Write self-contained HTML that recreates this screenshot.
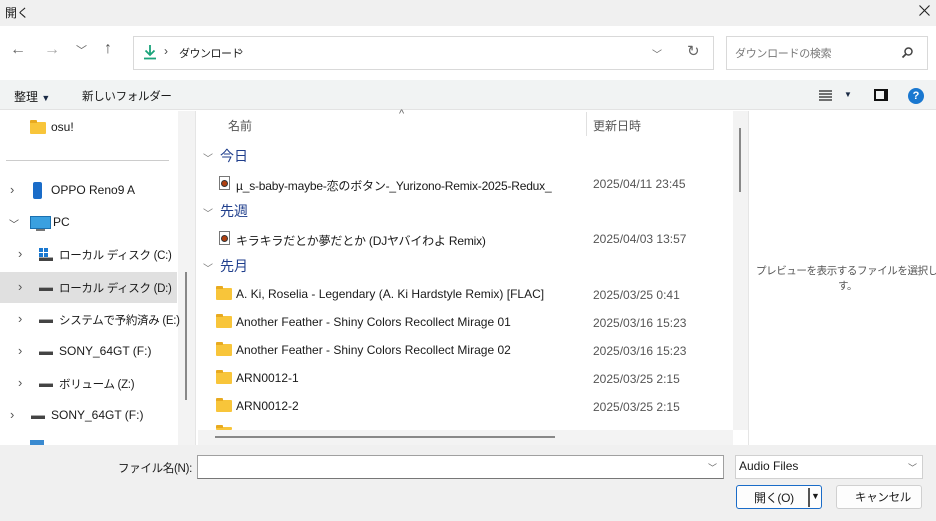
<!DOCTYPE html>
<html><head><meta charset="utf-8"><style>
*{margin:0;padding:0;box-sizing:border-box}
body{width:936px;height:521px;overflow:hidden;background:#fff;font-family:"Liberation Sans","Noto Sans CJK JP",sans-serif;font-size:12px;color:#1a1a1a;position:relative}
.a{position:absolute;white-space:nowrap}
.j{font-size:11.5px;letter-spacing:-0.3px}
.fold{position:absolute;width:16px;height:12px;background:#f8c53a;border-radius:1px}
.fold:before{content:"";position:absolute;left:0;top:-2px;width:7px;height:3px;background:#e8aa20;border-radius:1px 1px 0 0}
.file{position:absolute;width:11px;height:14px;border:1px solid #777;background:#fff}
.file:after{content:"";position:absolute;left:2px;top:4px;width:5px;height:5px;border-radius:50%;background:#b04010;box-shadow:0 0 0 1px #333}
.chev{position:absolute;color:#555;font-size:13px}
.drive{position:absolute;width:14px;height:4px;background:#444;border-top:1px solid #aaa}
.grp{color:#1f3e8c;font-size:14px}
.date{color:#555}
</style></head><body>
<div class="a" style="left:0;top:0;width:936px;height:26px;background:#f0f0f0"></div>
<div class="a" style="left:5px;top:4px;font-size:12px">開く</div>
<svg class="a" style="left:919px;top:5px" width="11" height="11"><path d="M0.5 0.5l10 10M10.5 0.5l-10 10" stroke="#222" stroke-width="1.1"/></svg>
<div class="a" style="left:10px;top:41px;font-size:16px;color:#666">←</div>
<div class="a" style="left:44px;top:41px;font-size:16px;color:#aaa">→</div>
<div class="a" style="left:76px;top:42px;font-size:11px;color:#666">﹀</div>
<div class="a" style="left:104px;top:40px;font-size:16px;color:#555">↑</div>
<div class="a" style="left:133px;top:36px;width:581px;height:34px;border:1px solid #d9d9d9"></div>
<svg class="a" style="left:143px;top:44px" width="14" height="16"><path d="M7 1v10M2.5 6.5L7 11l4.5-4.5" stroke="#1aa37a" stroke-width="1.8" fill="none"/><path d="M1 14.5h12" stroke="#1aa37a" stroke-width="1.8"/></svg>
<div class="a" style="left:164px;top:44px;color:#444">›</div>
<div class="a" style="left:179px;top:45px;font-size:11px;letter-spacing:-0.5px">ダウンロード</div>
<div class="a" style="left:239px;top:44px;color:#444">›</div>
<div class="a" style="left:652px;top:46px;font-size:10px;color:#666">﹀</div>
<div class="a" style="left:687px;top:42px;font-size:15px;color:#666">↻</div>
<div class="a" style="left:726px;top:36px;width:202px;height:34px;border:1px solid #d9d9d9"></div>
<div class="a" style="left:735px;top:45px;color:#777;font-size:11px;letter-spacing:-0.3px">ダウンロードの検索</div>
<svg class="a" style="left:901px;top:46px" width="13" height="13"><circle cx="7.5" cy="5.5" r="3.5" stroke="#444" stroke-width="1.5" fill="none"/><path d="M5 8l-3.5 3.5" stroke="#444" stroke-width="1.8"/></svg>
<div class="a" style="left:0;top:80px;width:936px;height:30px;background:#f1f3f3;border-bottom:1px solid #e3e3e3"></div>
<div class="a" style="left:14px;top:88px">整理 <span style="font-size:9px;color:#1a2a44">▼</span></div>
<div class="a j" style="left:82px;top:88px">新しいフォルダー</div>
<svg class="a" style="left:819px;top:90px" width="14" height="11"><path d="M0 1h13M0 4h13M0 7h13M0 10h13" stroke="#222" stroke-width="1.2"/></svg>
<div class="a" style="left:844px;top:90px;font-size:8px;color:#1a2a44">▼</div>
<div class="a" style="left:874px;top:89px;width:14px;height:12px;border:2px solid #111;border-right:4px solid #111"></div>
<div class="a" style="left:908px;top:88px;width:16px;height:16px;border-radius:50%;background:#1a78d0;color:#fff;font-size:11px;font-weight:bold;text-align:center;line-height:16px">?</div>
<div class="a" style="left:178px;top:111px;width:17px;height:334px;background:#f3f3f3"></div>
<div class="a" style="left:185px;top:272px;width:2px;height:128px;background:#888"></div>
<div class="fold" style="left:30px;top:122px"></div><div class="a" style="left:51px;top:120px">osu!</div>
<div class="a" style="left:6px;top:160px;width:163px;height:1px;background:#ccc"></div>
<div class="chev" style="left:10px;top:182px">›</div>
<div class="a" style="left:33px;top:182px;width:9px;height:17px;background:#1a6cc8;border-radius:2px"></div>
<div class="a" style="left:51px;top:183px">OPPO Reno9 A</div>
<div class="a" style="left:9px;top:216px;font-size:10px;color:#444">﹀</div>
<div class="a" style="left:30px;top:216px;width:21px;height:13px;background:#3aa0e0;border:1px solid #1a70b0"></div>
<div class="a" style="left:36px;top:229px;width:9px;height:2px;background:#777"></div>
<div class="a" style="left:53px;top:215px">PC</div>
<div class="a" style="left:0;top:272px;width:177px;height:31px;background:#e0e0e0"></div>
<div class="chev" style="left:18px;top:246px">›</div>
<div class="a" style="left:39px;top:248px;width:4px;height:4px;background:#1a78d0;box-shadow:5px 0 #1a78d0,0 5px #1a78d0,5px 5px #1a78d0"></div>
<div class="drive" style="left:39px;top:257px"></div>
<div class="a j" style="left:59px;top:247px">ローカル ディスク (C:)</div>
<div class="chev" style="left:18px;top:279px">›</div><div class="drive" style="left:39px;top:287px"></div><div class="a j" style="left:59px;top:280px">ローカル ディスク (D:)</div>
<div class="chev" style="left:18px;top:311px">›</div><div class="drive" style="left:39px;top:319px"></div><div class="a j" style="left:59px;top:312px">システムで予約済み (E:)</div>
<div class="chev" style="left:18px;top:343px">›</div><div class="drive" style="left:39px;top:351px"></div><div class="a" style="left:59px;top:344px">SONY_64GT (F:)</div>
<div class="chev" style="left:18px;top:375px">›</div><div class="drive" style="left:39px;top:383px"></div><div class="a j" style="left:59px;top:376px">ボリューム (Z:)</div>
<div class="chev" style="left:10px;top:407px">›</div><div class="drive" style="left:31px;top:415px"></div><div class="a" style="left:51px;top:408px">SONY_64GT (F:)</div>
<div class="a" style="left:30px;top:440px;width:14px;height:5px;background:#3a8ad0"></div>
<div class="a" style="left:195px;top:111px;width:1px;height:334px;background:#e5e5e5"></div>
<div class="a" style="left:399px;top:108px;font-size:11px;color:#666">^</div>
<div class="a" style="left:228px;top:117px;color:#555">名前</div>
<div class="a" style="left:586px;top:112px;width:1px;height:24px;background:#e0e0e0"></div>
<div class="a" style="left:593px;top:117px;color:#555">更新日時</div>
<div class="a" style="left:733px;top:111px;width:15px;height:319px;background:#f3f3f3"></div>
<div class="a" style="left:739px;top:128px;width:2px;height:64px;background:#888"></div>
<div class="a" style="left:748px;top:111px;width:1px;height:334px;background:#e5e5e5"></div>
<div class="a" style="left:203px;top:150px;font-size:10px;color:#777">﹀</div><div class="a grp" style="left:220px;top:146px">今日</div>
<div class="file" style="left:219px;top:176px"></div><div class="a" style="left:236px;top:177px;letter-spacing:-0.2px">µ_s-baby-maybe-恋のボタン-_Yurizono-Remix-2025-Redux_</div><div class="a date" style="left:593px;top:177px">2025/04/11 23:45</div>
<div class="a" style="left:203px;top:205px;font-size:10px;color:#777">﹀</div><div class="a grp" style="left:220px;top:201px">先週</div>
<div class="file" style="left:219px;top:231px"></div><div class="a" style="left:236px;top:232px;letter-spacing:-0.2px">キラキラだとか夢だとか (DJヤバイわよ Remix)</div><div class="a date" style="left:593px;top:232px">2025/04/03 13:57</div>
<div class="a" style="left:203px;top:260px;font-size:10px;color:#777">﹀</div><div class="a grp" style="left:220px;top:256px">先月</div>
<div class="fold" style="left:216px;top:288px"></div><div class="a" style="left:236px;top:287px">A. Ki, Roselia - Legendary (A. Ki Hardstyle Remix) [FLAC]</div><div class="a date" style="left:593px;top:288px">2025/03/25 0:41</div>
<div class="fold" style="left:216px;top:316px"></div><div class="a" style="left:236px;top:343px;top:315px">Another Feather - Shiny Colors Recollect Mirage 01</div><div class="a date" style="left:593px;top:316px">2025/03/16 15:23</div>
<div class="fold" style="left:216px;top:344px"></div><div class="a" style="left:236px;top:343px">Another Feather - Shiny Colors Recollect Mirage 02</div><div class="a date" style="left:593px;top:344px">2025/03/16 15:23</div>
<div class="fold" style="left:216px;top:372px"></div><div class="a" style="left:236px;top:371px">ARN0012-1</div><div class="a date" style="left:593px;top:372px">2025/03/25 2:15</div>
<div class="fold" style="left:216px;top:400px"></div><div class="a" style="left:236px;top:399px">ARN0012-2</div><div class="a date" style="left:593px;top:400px">2025/03/25 2:15</div>
<div class="a" style="left:198px;top:430px;width:535px;height:15px;background:#f3f3f3"></div>
<div class="fold" style="left:216px;top:427px;height:3px"></div>
<div class="a" style="left:215px;top:436px;width:340px;height:2px;background:#888"></div>
<div class="a" style="left:756px;top:264px;color:#555;font-size:10.5px;letter-spacing:-0.4px;line-height:15px">プレビューを表示するファイルを選択しま<br><span style="padding-left:82px">す。</span></div>
<div class="a" style="left:0;top:445px;width:936px;height:76px;background:#f0f0f0"></div>
<div class="a" style="right:744px;top:460px;font-size:11.5px;letter-spacing:-0.3px">ファイル名(N):</div>
<div class="a" style="left:197px;top:455px;width:527px;height:24px;background:#fff;border:1px solid #a0a0a0;border-bottom-color:#777"></div>
<div class="a" style="left:708px;top:461px;font-size:9px;color:#666">﹀</div>
<div class="a" style="left:735px;top:455px;width:188px;height:24px;background:#fff;border:1px solid #d0d0d0"></div>
<div class="a" style="left:739px;top:459px">Audio Files</div>
<div class="a" style="left:908px;top:461px;font-size:9px;color:#666">﹀</div>
<div class="a" style="left:736px;top:485px;width:86px;height:24px;background:#fdfdfd;border:1px solid #1a6cc8;border-radius:3px"></div>
<div class="a" style="left:754px;top:489px;letter-spacing:-0.3px">開く(O)</div>
<div class="a" style="left:808px;top:488px;width:2px;height:19px;background:#555"></div>
<div class="a" style="left:811px;top:491px;font-size:9px">▼</div>
<div class="a" style="left:836px;top:485px;width:86px;height:24px;background:#fdfdfd;border:1px solid #d0d0d0;border-radius:3px"></div>
<div class="a j" style="left:855px;top:489px">キャンセル</div>
</body></html>
